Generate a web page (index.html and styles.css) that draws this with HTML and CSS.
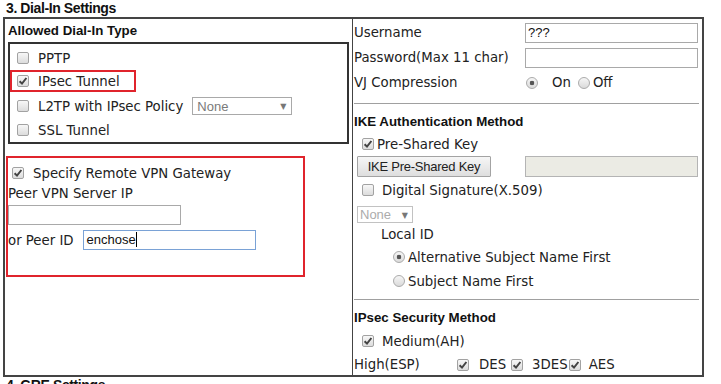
FILE: index.html
```html
<!DOCTYPE html>
<html lang="en">
<head>
  <meta charset="utf-8">
  <title>Dial-In Settings</title>
  <link rel="stylesheet" href="styles.css">
</head>
<body>

<div class="sec-title">3. Dial-In Settings</div>
<div class="panel">
  <div class="col col-left">
    <div class="grp-title">Allowed Dial-In Type</div>
    <div class="type-box">
      <div class="type-row"><label class="opt"><input type="checkbox">PPTP</label></div>
      <div class="type-row"><label class="opt opt-mark"><input type="checkbox" checked>IPsec Tunnel</label></div>
      <div class="type-row">
        <label class="opt"><input type="checkbox">L2TP with IPsec Policy</label>
        <span class="sel sel-policy"><select><option>None</option></select></span>
      </div>
      <div class="type-row"><label class="opt"><input type="checkbox">SSL Tunnel</label></div>
    </div>

    <div class="remote-box">
      <label class="remote-head"><input type="checkbox" checked>Specify Remote VPN Gateway</label>
      <div class="peer-label">Peer VPN Server IP</div>
      <input class="txt peer-ip" type="text">
      <div class="peer-id">
        <span>or Peer ID</span>
        <span class="txt txt-focus">enchose<span class="caret"></span></span>
      </div>
    </div>
  </div>

  <div class="col col-right">
    <div class="frow first">
      <span class="flabel">Username</span>
      <input class="txt wide" type="text" value="???">
    </div>
    <div class="frow">
      <span class="flabel">Password(Max 11 char)</span>
      <input class="txt wide" type="password">
    </div>
    <div class="frow">
      <span class="flabel">VJ Compression</span>
      <label class="rad-opt rad-on"><input type="radio" name="vj" checked>On</label>
      <label class="rad-opt rad-off"><input type="radio" name="vj">Off</label>
    </div>
    <hr class="sep">

    <div class="grp-title">IKE Authentication Method</div>
    <label class="chk-row psk"><input type="checkbox" checked>Pre-Shared Key</label>
    <div class="key-row">
      <span class="key-cell"><button type="button" class="btn">IKE Pre-Shared Key</button></span>
      <input class="txt wide" type="text" disabled>
    </div>
    <label class="chk-row dsig"><input type="checkbox">Digital Signature(X.509)</label>
    <div class="cert-row">
      <span class="sel sel-cert"><select disabled><option>None</option></select></span>
    </div>
    <div class="local-id">Local ID</div>
    <label class="rad-row"><input type="radio" name="lid" checked>Alternative Subject Name First</label>
    <label class="rad-row"><input type="radio" name="lid">Subject Name First</label>
    <hr class="sep sep2">

    <div class="grp-title">IPsec Security Method</div>
    <label class="chk-row dsig"><input type="checkbox" checked>Medium(AH)</label>
    <div class="esp-row">
      <span class="esp-label">High(ESP)</span>
      <label class="esp esp-des"><input type="checkbox" checked>DES</label>
      <label class="esp esp-3des"><input type="checkbox" checked>3DES</label>
      <label class="esp esp-aes"><input type="checkbox" checked>AES</label>
    </div>
  </div>
</div>
<div class="sec-title">4. GRE Settings</div>

</body>
</html>
```

FILE: styles.css
```css
body {
  margin: 0;
  font: 13.3px "DejaVu Sans", Verdana, sans-serif;
  color: #222;
  background: #fff;
}
.sec-title {
  font: bold 14px/16px "Liberation Sans", Arial, sans-serif;
  letter-spacing: -0.4px;
  color: #111;
  padding-left: 6px;
  height: 17px;
}
.panel {
  display: flex;
  margin-left: 3px;
  width: 701px;
  height: 360px;
  box-sizing: border-box;
  border: 2px solid #444;
}
.col-left {
  width: 347px;
  border-right: 1px solid #444;
}
.col-right {
  flex: 1;
  padding-left: 1px;
}
.grp-title {
  font: bold 13.3px/20px "Liberation Sans", Arial, sans-serif;
  color: #111;
  height: 20px;
  margin-top: 8px;
}
.col-left .grp-title {
  height: 23px;
  line-height: 23px;
  margin-top: 0;
  padding-left: 3px;
}

/* check boxes and radios */
input[type=checkbox] {
  -webkit-appearance: none;
  appearance: none;
  width: 12px;
  height: 12px;
  margin: 0;
  flex: none;
  box-sizing: border-box;
  border: 1px solid #a2a2a2;
  border-radius: 2px;
  background: linear-gradient(#f7f7f7, #dcdcdc);
}
input[type=checkbox]:checked {
  background: url("data:image/svg+xml,%3Csvg xmlns='http://www.w3.org/2000/svg' width='10' height='10'%3E%3Cpath d='M1.6 5.2 L4 7.6 L8.4 2' fill='none' stroke='%23444' stroke-width='2'/%3E%3C/svg%3E") center no-repeat,
              linear-gradient(#f7f7f7, #dcdcdc);
}
input[type=radio] {
  -webkit-appearance: none;
  appearance: none;
  width: 12px;
  height: 12px;
  margin: 0;
  flex: none;
  box-sizing: border-box;
  border: 1px solid #ababab;
  border-radius: 50%;
  background: linear-gradient(#f6f6f6, #dadada);
}
input[type=radio]:checked {
  background: radial-gradient(circle, #555 0, #555 2px, transparent 2.6px),
              linear-gradient(#f6f6f6, #dadada);
}

/* allowed dial-in type */
.type-box {
  margin-left: 3px;
  width: 341px;
  height: 102px;
  box-sizing: border-box;
  border: 2px solid #333;
  padding-top: 2px;
}
.type-row {
  display: flex;
  align-items: center;
  height: 24px;
}
.opt {
  display: flex;
  align-items: center;
  height: 22px;
  box-sizing: border-box;
  border: 2px solid transparent;
  padding-left: 5px;
}
.opt input {
  margin-right: 9px;
}
.opt-mark {
  border-color: #e0242c;
  padding-right: 14px;
  margin-top: -2px;
}

.sel {
  position: relative;
  display: inline-block;
}
.sel select {
  -webkit-appearance: none;
  appearance: none;
  display: block;
  box-sizing: border-box;
  border: 1px solid #a9a9a9;
  border-radius: 0;
  background: #fff;
  color: #7a7a7a;
  font: 13px "Liberation Sans", Arial, sans-serif;
  padding: 0 0 0 4px;
  margin: 0;
}
.sel::after {
  content: "\25BC";
  position: absolute;
  top: 50%;
  transform: translateY(-50%);
  font: 8px "DejaVu Sans", sans-serif;
  color: #777;
  pointer-events: none;
}
.sel-policy {
  margin-left: 7px;
}
.sel-policy select {
  width: 100px;
  height: 18px;
}
.sel-policy::after {
  right: 6px;
}
.sel-cert select {
  width: 56px;
  height: 17px;
  padding-left: 2px;
  color: #888;
}
.sel-cert::after {
  right: 5px;
}

/* remote gateway */
.remote-box {
  margin: 12px 0 0 1px;
  width: 299px;
  height: 121px;
  box-sizing: border-box;
  border: 2px solid #e0242c;
}
.remote-head {
  display: flex;
  align-items: center;
  height: 26px;
  margin-top: 2px;
  padding-left: 4px;
}
.remote-head input {
  margin-right: 9px;
}
.peer-label {
  height: 16px;
  line-height: 16px;
}
.txt {
  display: block;
  box-sizing: border-box;
  height: 20px;
  border: 1px solid #a9a9a9;
  font: 13px "Liberation Sans", Arial, sans-serif;
  color: #111;
  padding: 0 2px;
  margin: 0;
  background: #fff;
}
.peer-ip {
  margin-top: 3px;
  width: 173px;
}
.peer-id {
  display: flex;
  align-items: center;
  height: 20px;
  margin-top: 5px;
}
.txt-focus {
  margin-left: 9px;
  width: 173px;
  border-color: #7aa2d6;
  line-height: 18px;
  padding-left: 3px;
}
.caret {
  display: inline-block;
  width: 1px;
  height: 15px;
  background: #000;
  vertical-align: -3px;
}

/* right column */
.frow {
  display: flex;
  align-items: center;
  height: 25px;
}
.frow.first {
  margin-top: 1px;
}
.flabel {
  width: 171px;
  flex: none;
}
.wide {
  width: 173px;
}
.wide:disabled {
  background: #ebebe4;
  border-color: #b4b4b4;
  height: 21px;
}
.rad-opt {
  display: flex;
  align-items: center;
}
.rad-on input {
  margin: 0 14px 0 1px;
}
.rad-off input {
  margin: 0 3px 0 7px;
}
.sep {
  margin: 8px 3px 0 0;
  border: 0;
  border-top: 1px solid #a0a0a0;
  height: 0;
}
.sep2 {
  margin-top: 6px;
}
.chk-row {
  display: flex;
  align-items: center;
  height: 24px;
  padding-left: 8px;
}
.psk input {
  margin-right: 3px;
}
.dsig input {
  margin-right: 8px;
}
.dsig {
  margin-top: 1px;
}
.key-row {
  display: flex;
  align-items: center;
  height: 21px;
}
.key-cell {
  width: 171px;
  flex: none;
  padding-left: 3px;
  box-sizing: border-box;
}
.btn {
  display: block;
  width: 134px;
  height: 21px;
  box-sizing: border-box;
  border: 1px solid #a3a3a3;
  border-radius: 1px;
  background: linear-gradient(#f6f6f6, #dedede);
  font: 13px "Liberation Sans", Arial, sans-serif;
  letter-spacing: -0.25px;
  color: #222;
  padding: 0;
  margin: 0;
}
.cert-row {
  display: flex;
  margin-top: 4px;
  padding-left: 3px;
  height: 17px;
}
.local-id {
  margin-top: 2px;
  height: 20px;
  line-height: 20px;
  padding-left: 27px;
}
.rad-row {
  display: flex;
  align-items: center;
  height: 24px;
  padding-left: 39px;
}
.rad-row input {
  margin-right: 3px;
}
.esp-row {
  display: flex;
  align-items: center;
  height: 23px;
}
.esp-label {
  width: 103px;
  flex: none;
}
.esp {
  display: flex;
  align-items: center;
}
.esp-des input {
  margin-right: 10px;
}
.esp-3des input {
  margin: 0 9px 0 5px;
}
.esp-aes input {
  margin: 0 8px 0 1px;
}
```
